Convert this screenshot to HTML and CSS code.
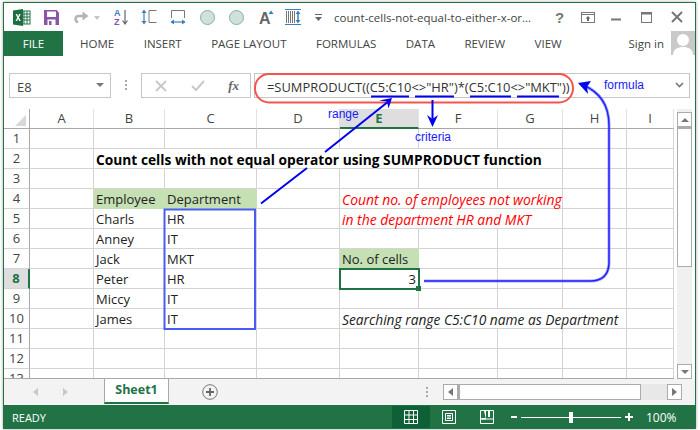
FILE: index.html
```html
<!DOCTYPE html>
<html lang="en">
<head>
    <meta charset="UTF-8">
    <title>count-cells-not-equal-to-either-x-or...</title>
    <link rel="stylesheet" href="styles.css">
</head>
<body>
<div class="window">
    <div class="titlebar">
        <div class="qat">
            <svg class="ic-excel" width="18" height="17" viewBox="0 0 18 17">
                <rect x="8" y="2" width="9" height="13" fill="#fff" stroke="#217346"/>
                <path d="M11 2v13M14 2v13M8 5h9M8 8h9M8 11h9" stroke="#217346" stroke-width="1"/>
                <path d="M0 1.5L10 0v17L0 15.5z" fill="#1d6f42"/>
                <path d="M2.6 5l1.5 0 1 2.2L6.2 5h1.5L5.9 8.5l1.9 3.6H6.2L5.1 9.7 4 12.1H2.5l1.8-3.6z" fill="#fff"/>
            </svg>
            <svg class="ic-save" width="15" height="15" viewBox="0 0 15 15">
                <path d="M0 0h12.5L15 2.5V15H0z" fill="#8a55a8"/>
                <rect x="3" y="1.5" width="9" height="5.5" fill="#fff"/>
                <rect x="3.5" y="9.5" width="8" height="5.5" fill="#fff"/>
                <rect x="5" y="11" width="2.5" height="4" fill="#8a55a8"/>
            </svg>
            <svg class="ic-redo" width="16" height="13" viewBox="0 0 16 13">
                <path d="M5 11.5C1.5 9.5 1.5 5 6 5h5" fill="none" stroke="#b4b4b4" stroke-width="2.4"/>
                <path d="M9.5 0.5L15.5 5 9.5 9.5z" fill="#b4b4b4"/>
            </svg>
            <span class="caret-small"></span>
            <svg class="ic-sort" width="15" height="24" viewBox="0 -4 15 24">
                <text x="0" y="7" class="ic-a">A</text>
                <text x="0" y="15.5" class="ic-z">Z</text>
                <path d="M11 1v13M8.5 11.5L11 15l2.500-3.500" fill="none" stroke="#666" stroke-width="1.200"/>
            </svg>
            <svg class="ic-height" width="16" height="16" viewBox="0 0 16 16">
                <path d="M3 2v12" stroke="#3d7fb8" stroke-width="1.200"/>
                <path d="M0.500 4L3 0.500 5.500 4zM0.500 12L3 15.500 5.500 12z" fill="#3d7fb8"/>
                <path d="M15.500 1.500H8v12h7.500" fill="none" stroke="#777"/>
            </svg>
            <svg class="ic-width" width="16" height="15" viewBox="0 0 16 15">
                <path d="M1.500 8V0.500h13V8" fill="none" stroke="#777"/>
                <path d="M1 12h14" stroke="#3d7fb8" stroke-width="1.200"/>
                <path d="M4 9.500L0.500 12 4 14.500zM12 9.500L15.500 12 12 14.500z" fill="#3d7fb8"/>
            </svg>
            <span class="ic-circle"></span>
            <span class="ic-circle"></span>
            <svg class="ic-font" width="16" height="25" viewBox="0 -5 16 25">
                <text x="0" y="14" class="ic-big-a">A</text>
                <path d="M9.500 4L12 0.500 14.500 4z" fill="#3d7fb8"/>
            </svg>
            <svg class="ic-cols" width="16" height="16" viewBox="0 0 16 16">
                <path d="M0 0.500h16M0 15.500h16" stroke="#3d7fb8"/>
                <path d="M1.500 2v12M3.500 2v12M5.500 2v12M7.500 2v12M9.500 2v12" stroke="#777"/>
                <path d="M13 3v10" stroke="#3d7fb8" stroke-width="1.500"/>
                <path d="M10.500 5L13 1.500 15.500 5zM10.500 11L13 14.500 15.500 11z" fill="#3d7fb8"/>
            </svg>
            <svg class="ic-more" width="7" height="7" viewBox="0 0 7 7">
                <path d="M0 0.500h7" stroke="#666"/>
                <path d="M0 3h7L3.500 7z" fill="#666"/>
            </svg>
        </div>
        <div class="doc-title">count-cells-not-equal-to-either-x-or...</div>
        <div class="win-controls">
            <span class="help">?</span>
            <svg width="14" height="11" viewBox="0 0 14 11">
                <rect x="0.500" y="0.500" width="13" height="10" fill="none" stroke="#777"/>
                <path d="M1 2.500h12" stroke="#777"/>
                <path d="M4.500 6.500L7 4l2.500 2.500H8V9H6V6.500z" fill="#666"/>
            </svg>
            <svg class="ctl-min" width="11" height="12" viewBox="0 0 11 12">
                <path d="M0 8.500h10" stroke="#777" stroke-width="2"/>
            </svg>
            <svg class="ctl-max" width="11" height="11" viewBox="0 0 11 11">
                <rect x="0.500" y="0.500" width="10" height="10" fill="none" stroke="#777"/>
                <path d="M0 1.500h11" stroke="#777" stroke-width="2"/>
            </svg>
            <svg class="ctl-close" width="12" height="12" viewBox="0 0 12 12">
                <path d="M1 1l10 10M11 1L1 11" stroke="#777" stroke-width="2"/>
            </svg>
        </div>
    </div>

    <div class="tabs">
        <span class="tab tab-file">FILE</span>
        <span class="tab">HOME</span>
        <span class="tab">INSERT</span>
        <span class="tab">PAGE LAYOUT</span>
        <span class="tab">FORMULAS</span>
        <span class="tab">DATA</span>
        <span class="tab">REVIEW</span>
        <span class="tab">VIEW</span>
        <span class="sign-in">Sign in</span>
        <svg class="avatar" width="24" height="24" viewBox="0 0 24 24">
            <rect width="24" height="24" fill="#c9c9c9"/>
            <circle cx="12" cy="9" r="6" fill="#fff"/>
            <path d="M2 24c0-6 5-8 10-8s10 2 10 8z" fill="#fff"/>
        </svg>
    </div>

    <div class="formula-bar">
        <div class="name-box">E8<span class="caret"></span></div>
        <div class="grip"></div>
        <div class="fx-box">
            <svg width="12" height="12" viewBox="0 0 12 12">
                <path d="M1 1l10 10M11 1L1 11" stroke="#c8c8c8" stroke-width="1.800"/>
            </svg>
            <svg width="14" height="12" viewBox="0 0 14 12">
                <path d="M1 6l4 4 8-9" fill="none" stroke="#c8c8c8" stroke-width="2"/>
            </svg>
            <span class="fx">fx</span>
        </div>
        <div class="formula-input">
            <span>=SUMPRODUCT((C5:C10&lt;&gt;"HR")*(C5:C10&lt;&gt;"MKT"))</span>
            <svg class="chevron" width="9" height="6" viewBox="0 0 9 6">
                <path d="M1 1l3.500 3.500L8 1" fill="none" stroke="#777" stroke-width="1.600"/>
            </svg>
        </div>
    </div>

    <div class="sheet">
        <div class="grid-wrap">
            <table class="grid">
                <colgroup>
                    <col class="c-row"><col class="c-a"><col class="c-b"><col class="c-c"><col class="c-d">
                    <col class="c-e"><col class="c-f"><col class="c-g"><col class="c-h"><col class="c-i">
                </colgroup>
                <tr class="col-heads">
                    <th class="corner"><span class="triangle"></span></th>
                    <th>A</th><th>B</th><th>C</th><th>D</th><th class="active-col">E</th><th>F</th><th>G</th><th>H</th><th>I</th>
                </tr>
                <tr><th>1</th><td></td><td></td><td></td><td></td><td></td><td></td><td></td><td></td><td></td></tr>
                <tr><th>2</th><td></td><td colspan="6" class="title-cell">Count cells with not equal operator using SUMPRODUCT function</td><td></td><td></td></tr>
                <tr><th>3</th><td></td><td></td><td></td><td></td><td></td><td></td><td></td><td></td><td></td></tr>
                <tr><th>4</th><td></td><td class="filled">Employee</td><td class="filled">Department</td><td></td><td colspan="3" class="note-red">Count no. of employees not working</td><td></td><td></td></tr>
                <tr><th>5</th><td></td><td>Charls</td><td>HR</td><td></td><td colspan="3" class="note-red">in the department HR and MKT</td><td></td><td></td></tr>
                <tr><th>6</th><td></td><td>Anney</td><td>IT</td><td></td><td></td><td></td><td></td><td></td><td></td></tr>
                <tr><th>7</th><td></td><td>Jack</td><td>MKT</td><td></td><td class="filled">No. of cells</td><td></td><td></td><td></td><td></td></tr>
                <tr><th class="active-row">8</th><td></td><td>Peter</td><td>HR</td><td></td><td class="selected">3<span class="handle"></span></td><td></td><td></td><td></td><td></td></tr>
                <tr><th>9</th><td></td><td>Miccy</td><td>IT</td><td></td><td></td><td></td><td></td><td></td><td></td></tr>
                <tr><th>10</th><td></td><td>James</td><td>IT</td><td></td><td colspan="4" class="note">Searching range C5:C10 name as Department</td><td></td></tr>
                <tr><th>11</th><td></td><td></td><td></td><td></td><td></td><td></td><td></td><td></td><td></td></tr>
                <tr><th>12</th><td></td><td></td><td></td><td></td><td></td><td></td><td></td><td></td><td></td></tr>
                <tr><th>13</th><td></td><td></td><td></td><td></td><td></td><td></td><td></td><td></td><td></td></tr>
            </table>
        </div>
        <div class="vscroll">
            <div class="scroll-btn"><span class="arrow-up"></span></div>
            <div class="vthumb"></div>
            <div class="scroll-btn"><span class="arrow-down"></span></div>
        </div>
    </div>

    <div class="sheet-tabs">
        <div class="nav-arrows">
            <span class="arrow-left"></span>
            <span class="arrow-right"></span>
        </div>
        <div class="sheet-tab">Sheet1</div>
        <svg class="add-sheet" width="16" height="16" viewBox="0 0 16 16">
            <circle cx="8" cy="8" r="7.300" fill="none" stroke="#777"/>
            <path d="M8 4v8M4 8h8" stroke="#666" stroke-width="1.800"/>
        </svg>
        <div class="grip grip-tabs"></div>
        <div class="hscroll">
            <div class="hbtn"><span class="arrow-left dark"></span></div>
            <div class="hthumb"></div>
            <div class="htrack"></div>
            <div class="hbtn"><span class="arrow-right dark"></span></div>
        </div>
    </div>

    <div class="statusbar">
        <span class="ready">READY</span>
        <div class="view-btn active">
            <svg width="14" height="14" viewBox="0 0 14 14">
                <path d="M0.500 0.500h13v13h-13zM0.500 5h13M0.500 9.500h13M5 0.500v13M9.500 0.500v13" fill="none" stroke="#fff"/>
            </svg>
        </div>
        <div class="view-btn">
            <svg width="14" height="14" viewBox="0 0 14 14">
                <path d="M0.500 0.500h13v13h-13z" fill="none" stroke="#fff"/>
                <path d="M3.500 3.500h7v7h-7zM5 5.500h4M5 7h4M5 8.500h4" fill="none" stroke="#fff"/>
            </svg>
        </div>
        <div class="view-btn">
            <svg width="14" height="14" viewBox="0 0 14 14">
                <path d="M0.500 0.500h13v13h-13z" fill="none" stroke="#fff"/>
                <path d="M4 1h2v7H1.500V9.500h4.500M8 1h2v6H8z" fill="#fff" stroke="none"/>
                <path d="M1 9h12" stroke="#fff"/>
            </svg>
        </div>
        <span class="zoom-minus"></span>
        <div class="slider"><span class="slider-thumb"></span></div>
        <span class="zoom-plus"></span>
        <span class="zoom-value">100%</span>
    </div>
</div>

<svg class="annotations" width="700" height="430" viewBox="0 0 700 430">
    <rect x="255" y="74" width="318" height="28.500" rx="14" fill="none" stroke="#f4544f" stroke-width="2"/>
    <path d="M371 96.500h38M415 96.500h39M470 96.500h41M517 96.500h42" stroke="#0000f0" stroke-width="2"/>
    <rect x="164.500" y="209.500" width="90.500" height="119.500" fill="none" stroke="#4a5cf2" stroke-width="2"/>

    <path d="M432.500 100v24" stroke="#0000f0" stroke-width="2"/>
    <path d="M427 115l5.500 12 5.500-12-5.500 4z" fill="#0000f0"/>

    <path d="M261 203.500L307 168M325 152L389 101" fill="none" stroke="#0000f0" stroke-width="2"/>
    <path d="M392 98l-13 2.500 8 1 1.500 7z" fill="#0000f0"/>

    <path d="M424 281H590Q609 281 609 262V125Q609 96 583 85" fill="none" stroke="#5050ff" stroke-width="3" opacity="0.500"/>
    <path d="M424 281H590Q609 281 609 262V125Q609 96 583 85" fill="none" stroke="#2222ff" stroke-width="1.500"/>
    <path d="M578 83l13-2-4 6 1 7z" fill="#0000f0"/>

    <text x="328" y="118" class="label">range</text>
    <text x="415" y="141" class="label">criteria</text>
    <text x="604" y="89" class="label">formula</text>
</svg>
</body>
</html>
```

FILE: styles.css
```css
* {
    box-sizing: border-box;
}

body {
    margin: 0;
    background-color: #fff;
    font-family: "Open Sans", "Liberation Sans", sans-serif;
    color: #444;
    width: 700px;
    height: 430px;
    overflow: hidden;
    position: relative;
}

.window {
    margin: 2px 0 0 3px;
    width: 693px;
    height: 427px;
    border: 1px solid #217346;
    border-bottom: none;
    background-color: #fff;
    box-shadow: 0 0 3px rgba(0, 0, 0, 0.35);
    display: flex;
    flex-direction: column;
}

/* title bar */
.titlebar {
    height: 28px;
    display: flex;
    align-items: center;
}

.qat {
    display: flex;
    align-items: center;
    padding-left: 9px;
    width: 330px;
}

.qat svg,
.qat span {
    flex: none;
}

.ic-save { margin-left: 13px; }
.ic-redo { margin-left: 14px; }
.caret-small {
    margin-left: 5px;
    border: 3px solid transparent;
    border-top: 4px solid #c4c4c4;
    margin-top: 4px;
}
.ic-sort { margin-left: 14px; }
.ic-height { margin-left: 12px; }
.ic-width { margin-left: 13px; }
.ic-circle {
    width: 15px;
    height: 15px;
    border-radius: 50%;
    background-color: #cfe1da;
    border: 1px solid #7fb5a0;
    margin-left: 14px;
}
.ic-font { margin-left: 15px; }
.ic-cols { margin-left: 10px; }
.ic-more { margin-left: 14px; }

.ic-a, .ic-z {
    font: bold 9px "Liberation Sans", sans-serif;
}
.ic-a { fill: #3d7fb8; }
.ic-z { fill: #8a55a8; }
.ic-big-a {
    font: bold 16px "Liberation Sans", sans-serif;
    fill: #666;
}

.doc-title {
    font-size: 11.500px;
    color: #444;
    white-space: nowrap;
    width: 221px;
}

.win-controls {
    display: flex;
    align-items: center;
    gap: 19px;
}

.help {
    font: bold 15px "Liberation Sans", sans-serif;
    color: #777;
    width: 10px;
    margin-right: -3px;
}

.ctl-min { margin-left: -3px; }

/* ribbon tabs */
.tabs {
    height: 25px;
    display: flex;
    align-items: center;
    font-size: 11.500px;
    color: #444;
}

.tab {
    margin-right: 29.500px;
}

.tab-file {
    width: 59px;
    height: 25px;
    background-color: #217346;
    color: #fff;
    text-align: center;
    line-height: 25px;
    margin-right: 17px;
}

.sign-in {
    margin-left: auto;
    margin-right: 7px;
}

.avatar {
    margin-right: 0;
    align-self: flex-start;
}

/* formula bar */
.formula-bar {
    margin-top: 17px;
    height: 25px;
    display: flex;
    align-items: stretch;
    font-size: 12.900px;
}

.name-box {
    margin-left: 5px;
    width: 102px;
    border: 1px solid #c6c6c6;
    display: flex;
    align-items: center;
    justify-content: space-between;
    padding: 2px 6px 0 7px;
    color: #444;
}

.caret {
    border: 4px solid transparent;
    border-top: 4px solid #777;
    margin-top: 1px;
}

.grip {
    width: 2px;
    height: 10px;
    margin: 7px 14px 0;
    background: repeating-linear-gradient(#aaa 0, #aaa 2px, transparent 2px, transparent 4px);
}

.fx-box {
    width: 110px;
    border: 1px solid #c6c6c6;
    display: flex;
    align-items: center;
    justify-content: space-between;
    padding: 0 11px 0 13px;
}

.fx {
    font: italic bold 13px "Liberation Serif", serif;
    color: #666;
}

.formula-input {
    margin-left: 3px;
    width: 436px;
    border: 1px solid #c6c6c6;
    display: flex;
    align-items: center;
    justify-content: space-between;
    padding: 2px 5px 0 12px;
    color: #333;
    white-space: nowrap;
}

.chevron {
    margin-top: -3px;
}

/* sheet */
.sheet {
    margin-top: 11px;
    height: 270px;
    display: flex;
    position: relative;
}

.grid-wrap {
    width: 670px;
    height: 270px;
    overflow: hidden;
    border-bottom: 1px solid #a8a8a8;
}

.grid {
    table-layout: fixed;
    width: 670px;
    border-collapse: separate;
    border-spacing: 0;
    font-size: 13px;
    line-height: 15px;
    color: #222;
}

.c-row { width: 26px; }
.c-a { width: 64px; }
.c-b { width: 71px; }
.c-c { width: 92px; }
.c-d { width: 83px; }
.c-e { width: 79px; }
.c-f { width: 79px; }
.c-g { width: 65px; }
.c-h { width: 64px; }
.c-i { width: 47px; }

.grid tr {
    height: 20px;
}

.grid td {
    height: 20px;
    padding: 2px 0 0 2px;
    border-right: 1px solid #d4d4d4;
    border-bottom: 1px solid #d4d4d4;
    white-space: nowrap;
    overflow: visible;
}

.grid th {
    height: 20px;
    padding: 0;
    font-weight: normal;
    color: #444;
    font-size: 13px;
    border-right: 1px solid #a8a8a8;
    border-bottom: 1px solid #d4d4d4;
}

.grid .col-heads th {
    height: 20px;
    border-right: 1px solid #e2e2e2;
    border-bottom: 1px solid #a8a8a8;
}

.grid .col-heads .corner {
    border-right: 1px solid #a8a8a8;
    position: relative;
}

.triangle {
    position: absolute;
    right: 3px;
    bottom: 2px;
    width: 0;
    height: 0;
    border-left: 11px solid transparent;
    border-bottom: 11px solid #d8d8d8;
}

.grid .col-heads .active-col {
    background-color: #dedede;
    color: #217346;
    font-weight: bold;
    border-bottom: 2px solid #217346;
}

.grid .active-row {
    background-color: #dedede;
    color: #217346;
    font-weight: bold;
    border-right: 2px solid #217346;
}

.grid .title-cell {
    font-weight: bold;
    font-size: 13.750px;
    color: #000;
}

.grid .filled {
    background-color: #c5e0b3;
    border-right-color: #c5e0b3;
    border-bottom-color: #c5e0b3;
}

.note-red {
    color: #f00;
    font-style: italic;
    font-size: 13.900px;
}

.note {
    font-style: italic;
    font-size: 13.750px;
}

.grid .selected {
    position: relative;
    text-align: right;
    padding-right: 2px;
    outline: 2px solid #217346;
    outline-offset: -1px;
}

.handle {
    position: absolute;
    right: -3px;
    bottom: -3px;
    width: 5px;
    height: 5px;
    background-color: #217346;
}

/* scrollbars */
.vscroll {
    width: 15px;
    margin-left: 3px;
    background-color: #f0f0f0;
    display: flex;
    flex-direction: column;
    padding-top: 3px;
    height: 270px;
}

.scroll-btn {
    height: 15px;
    border: 1px solid #ababab;
    background-color: #fff;
    display: flex;
    align-items: center;
    justify-content: center;
}

.arrow-up {
    border: 4px solid transparent;
    border-bottom: 4px solid #777;
    margin-top: -4px;
}

.arrow-down {
    border: 4px solid transparent;
    border-top: 4px solid #777;
    margin-top: 4px;
}

.vthumb {
    height: 140px;
    background-color: #fff;
    border: 1px solid #ababab;
    border-top-width: 2px;
    margin-bottom: 97px;
}

.sheet-tabs {
    height: 26px;
    background-color: #f3f3f3;
    display: flex;
    align-items: center;
}

.nav-arrows {
    width: 100px;
    display: flex;
    gap: 25px;
    padding-left: 29px;
}

.arrow-left,
.arrow-right {
    display: block;
    width: 0;
    height: 0;
    border-top: 4px solid transparent;
    border-bottom: 4px solid transparent;
}

.arrow-left { border-right: 5px solid #c8c8c8; }
.arrow-right { border-left: 5px solid #c8c8c8; }
.arrow-left.dark { border-right-color: #777; }
.arrow-right.dark { border-left-color: #777; }

.sheet-tab {
    width: 65px;
    height: 25px;
    align-self: flex-start;
    background-color: #fff;
    border: 1px solid #a8a8a8;
    border-top: none;
    border-bottom: 2px solid #217346;
    color: #217346;
    font-weight: bold;
    font-size: 12.500px;
    text-align: center;
    line-height: 22px;
}

.add-sheet {
    margin-left: 33px;
}

.grip-tabs {
    margin: 0 0 0 208px;
}

.hscroll {
    margin-left: 15px;
    width: 239px;
    height: 16px;
    display: flex;
}

.hbtn {
    width: 15px;
    border: 1px solid #ababab;
    background-color: #fff;
    display: flex;
    align-items: center;
    justify-content: center;
}

.hthumb {
    width: 182px;
    border: 1px solid #ababab;
    border-left-width: 2px;
    border-right: none;
    background-color: #fff;
}

.htrack {
    flex: 1;
    background-color: #e8e8e8;
    border-left: 1px solid #ababab;
}

/* status bar */
.statusbar {
    height: 24px;
    background-color: #217346;
    color: #fff;
    display: flex;
    align-items: center;
    font-size: 11px;
}

.ready {
    padding-left: 8px;
    width: 388px;
}

.view-btn {
    width: 38px;
    height: 22px;
    display: flex;
    align-items: center;
    justify-content: center;
}

.view-btn.active {
    background-color: #0e6137;
}

.zoom-minus {
    width: 6px;
    height: 2px;
    background-color: #fff;
    margin-left: 5px;
}

.slider {
    width: 100px;
    height: 11px;
    margin-left: 4px;
    background: linear-gradient(#fff, #fff) center / 100% 1px no-repeat;
    display: flex;
    justify-content: center;
}

.slider-thumb {
    width: 4px;
    height: 11px;
    background-color: #fff;
}

.zoom-plus {
    width: 8px;
    height: 8px;
    margin-left: 4px;
    background:
        linear-gradient(#fff, #fff) center / 100% 2px no-repeat,
        linear-gradient(#fff, #fff) center / 2px 100% no-repeat;
}

.zoom-value {
    margin-left: 13px;
    font-size: 12px;
}

/* callouts drawn over the sheet */
.annotations {
    position: absolute;
    top: 0;
    left: 0;
    pointer-events: none;
}

.label {
    font: 12px "Liberation Sans", sans-serif;
    fill: #1a1aff;
}
```
